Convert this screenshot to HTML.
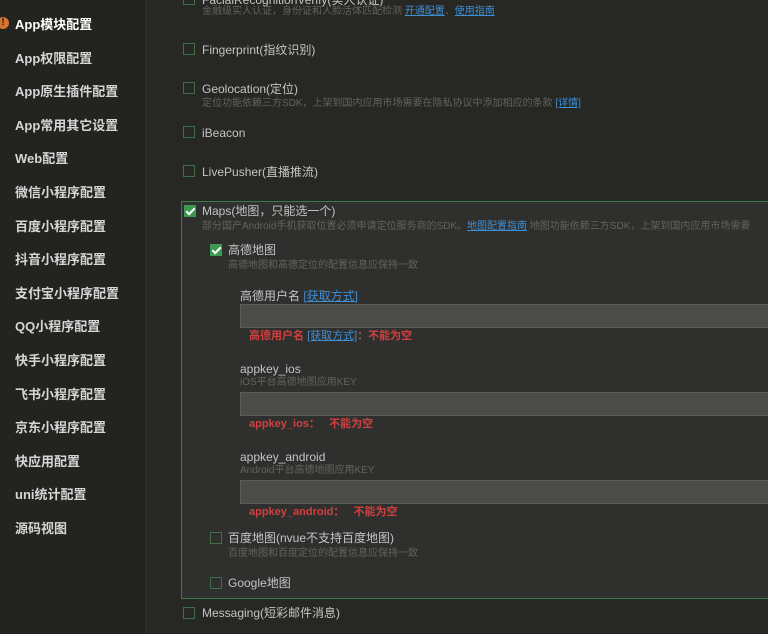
<!DOCTYPE html>
<html><head><meta charset="utf-8"><style>
*{margin:0;padding:0;box-sizing:border-box}
body{width:768px;height:634px;overflow:hidden;background:#272724;font-family:"Liberation Sans","Noto Sans CJK SC",sans-serif;position:relative;color:#c8c8c8}
.side{position:absolute;left:0;top:0;width:147px;height:634px;background:#232320;border-right:1px solid #333330}
.si{position:absolute;left:15px;font-size:13px;font-weight:bold;color:#d6d6d6;line-height:16px}
.a{position:absolute;white-space:nowrap}
.t{font-size:12px;color:#c4c4c4;line-height:14px}
.d{font-size:10px;color:#62625e;line-height:12px}
.cb{position:absolute;width:12px;height:12px;border:1px solid #3f6e48;background:transparent}
.cb.on{background:#3c9a50;border-color:#3c9a50}
.cb.on:after{content:"";position:absolute;left:3px;top:0px;width:3px;height:7px;border:solid #fff;border-width:0 2px 2px 0;transform:rotate(45deg)}
.lk{color:#3d8fd6;text-decoration:underline}
.in{position:absolute;left:240px;width:540px;height:24px;background:#4b4b49;border:1px solid #5a5a58}
.er{font-size:11px;color:#d04040;font-weight:bold;line-height:12px}
.box{position:absolute;left:181px;top:201px;width:600px;height:398px;border:1px solid #3d7a48;background:#2f2f2d}
</style></head><body>
<div class="side">
<div style="position:absolute;left:-3px;top:17px;width:12px;height:12px;border-radius:50%;background:#d9742c;color:#222;font-size:10px;font-weight:bold;text-align:center;line-height:12px">!</div>
<div class="si" style="top:17px;color:#fff">App模块配置</div>
<div class="si" style="top:51px">App权限配置</div>
<div class="si" style="top:84px">App原生插件配置</div>
<div class="si" style="top:118px">App常用其它设置</div>
<div class="si" style="top:151px">Web配置</div>
<div class="si" style="top:185px">微信小程序配置</div>
<div class="si" style="top:219px">百度小程序配置</div>
<div class="si" style="top:252px">抖音小程序配置</div>
<div class="si" style="top:286px">支付宝小程序配置</div>
<div class="si" style="top:319px">QQ小程序配置</div>
<div class="si" style="top:353px">快手小程序配置</div>
<div class="si" style="top:387px">飞书小程序配置</div>
<div class="si" style="top:420px">京东小程序配置</div>
<div class="si" style="top:454px">快应用配置</div>
<div class="si" style="top:487px">uni统计配置</div>
<div class="si" style="top:521px">源码视图</div>
</div>
<div class="cb" style="left:183px;top:-7px"></div>
<div class="a t" style="left:202px;top:-7px">FacialRecognitionVerify(实人认证)</div>
<div class="a d" style="left:202px;top:6px">金融级实人认证，身份证和人脸活体匹配检测 <span class="lk">开通配置</span>、<span class="lk">使用指南</span></div>
<div class="cb" style="left:183px;top:43px"></div>
<div class="a t" style="left:202px;top:43px">Fingerprint(指纹识别)</div>
<div class="cb" style="left:183px;top:82px"></div>
<div class="a t" style="left:202px;top:82px">Geolocation(定位)</div>
<div class="a d" style="left:202px;top:98px">定位功能依赖三方SDK，上架到国内应用市场需要在隐私协议中添加相应的条款 <span class="lk">[详情]</span></div>
<div class="cb" style="left:183px;top:126px"></div>
<div class="a t" style="left:202px;top:126px">iBeacon</div>
<div class="cb" style="left:183px;top:165px"></div>
<div class="a t" style="left:202px;top:165px">LivePusher(直播推流)</div>
<div class="box"></div>
<div class="cb on" style="left:184px;top:205px"></div>
<div class="a t" style="left:202px;top:204px">Maps(地图，只能选一个)</div>
<div class="a d" style="left:202px;top:221px">部分国产Android手机获取位置必须申请定位服务商的SDK。<span class="lk">地图配置指南</span> 地图功能依赖三方SDK，上架到国内应用市场需要</div>
<div class="cb on" style="left:210px;top:244px"></div>
<div class="a t" style="left:228px;top:243px">高德地图</div>
<div class="a d" style="left:228px;top:260px">高德地图和高德定位的配置信息应保持一致</div>
<div class="a t" style="left:240px;top:289px">高德用户名 <span class="lk">[获取方式]</span></div>
<div class="in" style="top:304px"></div>
<div class="a er" style="left:249px;top:330px">高德用户名 <span class="lk" style="font-weight:normal">[获取方式]</span>：不能为空</div>
<div class="a t" style="left:240px;top:362px">appkey_ios</div>
<div class="a d" style="left:240px;top:377px">iOS平台高德地图应用KEY</div>
<div class="in" style="top:392px"></div>
<div class="a er" style="left:249px;top:418px">appkey_ios：&nbsp;&nbsp;&nbsp;不能为空</div>
<div class="a t" style="left:240px;top:450px">appkey_android</div>
<div class="a d" style="left:240px;top:465px">Android平台高德地图应用KEY</div>
<div class="in" style="top:480px"></div>
<div class="a er" style="left:249px;top:506px">appkey_android：&nbsp;&nbsp;&nbsp;不能为空</div>
<div class="cb" style="left:210px;top:532px"></div>
<div class="a t" style="left:228px;top:531px">百度地图(nvue不支持百度地图)</div>
<div class="a d" style="left:228px;top:548px">百度地图和百度定位的配置信息应保持一致</div>
<div class="cb" style="left:210px;top:577px"></div>
<div class="a t" style="left:228px;top:576px">Google地图</div>
<div class="cb" style="left:183px;top:607px"></div>
<div class="a t" style="left:202px;top:606px">Messaging(短彩邮件消息)</div>
</body></html>
